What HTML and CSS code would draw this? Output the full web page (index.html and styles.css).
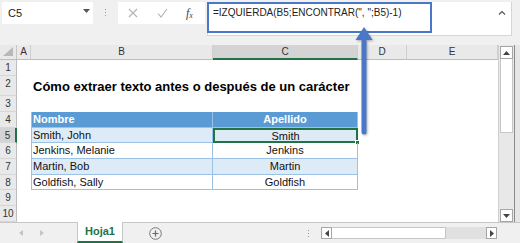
FILE: index.html
```html
<!DOCTYPE html>
<html lang="es">
<head>
  <meta charset="UTF-8">
  <title>Hoja1 - Excel</title>
  <link rel="stylesheet" href="styles.css">
</head>
<body>
  <div class="app">
    <div class="toolbar">
      <div class="namebox">
        <span>C5</span>
        <svg width="7" height="4" viewBox="0 0 7 4"><path d="M0 0h7L3.5 4z" fill="#555"/></svg>
      </div>
      <div class="grip"><i></i><i></i><i></i></div>
      <div class="fbtns">
        <svg width="10" height="10" viewBox="0 0 10 10"><path d="M1 1l8 8M9 1l-8 8" stroke="#b3b3b3" stroke-width="1.1" fill="none"/></svg>
        <svg width="11" height="10" viewBox="0 0 11 10"><path d="M1 5.5l3 3.5 6-8" stroke="#b3b3b3" stroke-width="1.1" fill="none"/></svg>
        <span class="fx">f<sub>x</sub></span>
      </div>
      <div class="fbox">
        <div class="hl">=IZQUIERDA(B5;ENCONTRAR(", ";B5)-1)</div>
        <svg class="up" width="8" height="5" viewBox="0 0 8 5"><path d="M1 4.5L4 1.5l3 3" stroke="#555" stroke-width="1.2" fill="none"/></svg>
      </div>
    </div>

    <div class="sheet">
      <div class="grid">
        <div class="corner"><svg width="10" height="9" viewBox="0 0 10 9"><path d="M10 0v9H0z" fill="#b8b8b8"/></svg></div>
        <div class="ch">A</div>
        <div class="ch">B</div>
        <div class="ch sel">C</div>
        <div class="ch">D</div>
        <div class="ch">E</div>

        <div class="rh">1</div><div></div><div></div><div></div><div></div><div></div>

        <div class="rh">2</div><div></div>
        <div class="title">Cómo extraer texto antes o después de un carácter</div>
        <div></div><div></div><div></div>

        <div class="rh">3</div><div></div><div></div><div></div><div></div><div></div>

        <div class="rh">4</div><div></div>
        <div class="tb th left">Nombre</div>
        <div class="tb th mid">Apellido</div>
        <div></div><div></div>

        <div class="rh sel">5</div><div></div>
        <div class="tb band left">Smith, John</div>
        <div class="tb band mid active">Smith<span class="handle"></span></div>
        <div></div><div></div>

        <div class="rh">6</div><div></div>
        <div class="tb left">Jenkins, Melanie</div>
        <div class="tb mid">Jenkins</div>
        <div></div><div></div>

        <div class="rh">7</div><div></div>
        <div class="tb band left">Martin, Bob</div>
        <div class="tb band mid">Martin</div>
        <div></div><div></div>

        <div class="rh">8</div><div></div>
        <div class="tb left">Goldfish, Sally</div>
        <div class="tb mid">Goldfish</div>
        <div></div><div></div>

        <div class="rh">9</div><div></div><div></div><div></div><div></div><div></div>
        <div class="rh">10</div><div></div><div></div><div></div><div></div><div></div>
      </div>

      <div class="vscroll">
        <div class="sbtn"><svg width="7" height="4" viewBox="0 0 7 4"><path d="M0 4h7L3.5 0z" fill="#444"/></svg></div>
        <div class="vthumb"></div>
        <div class="vtrack"></div>
        <div class="sbtn"><svg width="7" height="4" viewBox="0 0 7 4"><path d="M0 0h7L3.5 4z" fill="#444"/></svg></div>
      </div>
      <div class="edge"></div>
    </div>

    <div class="tabs">
      <div class="navs">
        <svg width="4" height="6" viewBox="0 0 4 6"><path d="M4 0v6L0 3z" fill="#c4c4c4"/></svg>
        <svg width="4" height="6" viewBox="0 0 4 6"><path d="M0 0v6l4-3z" fill="#c4c4c4"/></svg>
      </div>
      <div class="tab">Hoja1</div>
      <div class="add">
        <svg width="13" height="13" viewBox="0 0 13 13"><circle cx="6.5" cy="6.5" r="5.8" stroke="#777" stroke-width="1" fill="none"/><path d="M6.5 3.5v6M3.5 6.5h6" stroke="#666" stroke-width="1.2"/></svg>
      </div>
      <div class="dots"><i></i><i></i><i></i></div>
      <div class="hscroll">
        <div class="hbtn"><svg width="4" height="7" viewBox="0 0 4 7"><path d="M4 0v7L0 3.5z" fill="#444"/></svg></div>
        <div class="hthumb"></div>
        <div class="htrack"></div>
        <div class="hbtn"><svg width="4" height="7" viewBox="0 0 4 7"><path d="M0 0v7l4-3.5z" fill="#444"/></svg></div>
      </div>
    </div>

    <svg class="arrow" width="520" height="243" viewBox="0 0 520 243">
      <path d="M361.5 39h5v93a2.5 2.5 0 0 1-5 0z" fill="#4a78c6"/>
      <path d="M364 27l8.5 13h-17z" fill="#4a78c6"/>
    </svg>
  </div>
</body>
</html>
```

FILE: styles.css
```css
* {
  box-sizing: border-box;
}

body {
  margin: 0;
  font-family: "Liberation Sans", Arial, sans-serif;
  background: #f0f0f0;
}

.app {
  position: relative;
  width: 520px;
  height: 243px;
  overflow: hidden;
  background: #f0f0f0;
}

/* formula bar */
.toolbar {
  display: flex;
  align-items: flex-start;
  height: 45px;
  padding-top: 2px;
}

.namebox {
  display: flex;
  align-items: center;
  justify-content: space-between;
  width: 91px;
  height: 22px;
  margin-left: 2px;
  padding: 0 3px 0 6px;
  background: #fff;
  font-size: 11px;
  color: #222;
}

.namebox svg {
  margin-bottom: 4px;
}

.grip {
  display: flex;
  flex-direction: column;
  align-items: center;
  gap: 2px;
  width: 25px;
  padding-top: 7px;
}

.grip i,
.dots i {
  display: block;
  width: 1px;
  height: 1px;
  background: #999;
}

.fbtns {
  display: flex;
  align-items: center;
  width: 87px;
  height: 22px;
  padding-left: 10px;
  background: #fff;
}

.fbtns svg:nth-child(2) {
  margin-left: 19px;
}

.fx {
  margin-left: 18px;
  font-family: "Liberation Serif", serif;
  font-style: italic;
  font-size: 12px;
  color: #444;
}

.fx sub {
  font-size: 8px;
  vertical-align: -1px;
}

.fbox {
  position: relative;
  width: 305px;
  height: 34px;
  margin-left: 2px;
  background: #fff;
  border: 1px solid #d6d6d6;
  border-top: none;
}

.hl {
  width: 225px;
  height: 31px;
  margin-left: -1px;
  padding: 3px 0 0 4px;
  border: 2px solid #4a78c6;
  font-size: 10px;
  color: #222;
  white-space: nowrap;
}

.fbox .up {
  position: absolute;
  right: 5px;
  top: 8px;
}

/* sheet */
.sheet {
  display: flex;
  height: 177px;
}

.grid {
  display: grid;
  grid-template-columns: 17px 14px 182px 145px 49px 91px;
  grid-template-rows: 15px 16px 20px 16px 16px 15px 16px 16px 15px 16px 16px;
  width: 498px;
  background: #fff;
  font-size: 11px;
  color: #111;
}

.corner {
  display: flex;
  align-items: flex-end;
  justify-content: flex-end;
  padding: 0 3px 3px 0;
  background: #e9e9e9;
  border-right: 1px solid #c6c6c6;
  border-bottom: 1px solid #bdbdbd;
}

.ch {
  background: #e9e9e9;
  border-right: 1px solid #cfcfcf;
  border-bottom: 1px solid #bdbdbd;
  font-size: 10px;
  line-height: 14px;
  text-align: center;
  color: #333;
}

.ch.sel {
  background: #d4d4d4;
  border-bottom: 2px solid #217346;
}

.rh {
  background: #e9e9e9;
  border-right: 1px solid #bdbdbd;
  border-bottom: 1px solid #d6d6d6;
  font-size: 10px;
  line-height: 15px;
  text-align: center;
  color: #333;
}

.rh.sel {
  background: #d4d4d4;
  border-right: 2px solid #217346;
}

.title {
  position: relative;
  z-index: 1;
  padding: 3px 0 0 2px;
  font-size: 13px;
  font-weight: bold;
  white-space: nowrap;
  color: #000;
}

.tb {
  position: relative;
  border-bottom: 1px solid #9bc2e6;
  border-right: 1px solid #9bc2e6;
  line-height: 15px;
  white-space: nowrap;
}

.tb.left {
  border-left: 1px solid #9bc2e6;
  padding-left: 1px;
}

.tb.mid {
  text-align: center;
}

.tb.th {
  background: #5b9bd5;
  color: #fff;
  font-weight: bold;
  border-color: #9bc2e6;
}

.tb.band {
  background: #ddebf7;
}

.tb.active {
  border: 2px solid #217346;
  line-height: 12px;
}

.handle {
  position: absolute;
  right: -4px;
  bottom: -4px;
  width: 5px;
  height: 5px;
  background: #217346;
  border: 1px solid #fff;
}

.vscroll {
  display: flex;
  flex-direction: column;
  width: 16px;
  padding: 1px 1px 0;
  background: #e8e8e8;
  border-left: 1px solid #d0d0d0;
}

.sbtn {
  display: flex;
  align-items: center;
  justify-content: center;
  height: 13px;
  background: #fff;
  border: 1px solid #a6a6a6;
}

.vthumb {
  height: 74px;
  background: #fff;
  border: 1px solid #c6c6c6;
  border-top: none;
}

.vtrack {
  flex: 1;
}

.edge {
  width: 6px;
  background: #e6e6e6;
  border-left: 1px solid #8a8a8a;
}

/* sheet tabs */
.tabs {
  display: flex;
  align-items: center;
  height: 21px;
  background: #f0f0f0;
  border-top: 1px solid #c6c6c6;
}

.navs {
  display: flex;
  gap: 17px;
  width: 77px;
  padding-left: 19px;
}

.tab {
  align-self: stretch;
  width: 46px;
  margin-top: -1px;
  background: #fff;
  border-left: 1px solid #c6c6c6;
  border-right: 1px solid #c6c6c6;
  border-bottom: 2px solid #217346;
  font-size: 11px;
  font-weight: bold;
  line-height: 19px;
  text-align: center;
  color: #217346;
}

.add {
  display: flex;
  margin-left: 26px;
}

.dots {
  display: flex;
  flex-direction: column;
  gap: 2px;
  margin-left: 146px;
}

.hscroll {
  display: flex;
  width: 176px;
  height: 12px;
  margin-left: 12px;
  background: #e0e0e0;
}

.hbtn {
  display: flex;
  align-items: center;
  justify-content: center;
  width: 11px;
  background: #fff;
  border: 1px solid #a6a6a6;
}

.hthumb {
  width: 114px;
  background: #fff;
  border: 1px solid #c6c6c6;
  border-left: none;
}

.htrack {
  flex: 1;
}

.arrow {
  position: absolute;
  left: 0;
  top: 0;
  pointer-events: none;
  filter: drop-shadow(1px 1px 1px rgba(0, 0, 0, 0.3));
}
```
